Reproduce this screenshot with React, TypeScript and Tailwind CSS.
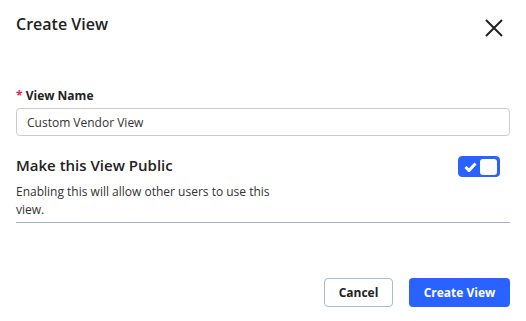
import React, { useState } from "react";

export default function App() {
  const [name, setName] = useState("Custom Vendor View");
  const [isPublic, setIsPublic] = useState(true);

  return (
    <div
      className="w-[526px] h-[321px] bg-white text-[#222] flex flex-col px-4 overflow-hidden"
      style={{ fontFamily: '"Open Sans", "Noto Sans", sans-serif' }}
    >
      {/* header */}
      <div className="flex items-start justify-between pt-[13px]">
        <h1 className="text-[16px] leading-[22px] font-semibold text-[#222]">Create View</h1>
        <button type="button" aria-label="Close" className="mt-[6px] mr-[7px] text-[#222]">
          <svg width="18" height="18" viewBox="0 0 18 18" fill="none">
            <path d="M1 1L17 17M17 1L1 17" stroke="currentColor" strokeWidth="2" />
          </svg>
        </button>
      </div>

      {/* view name */}
      <label className="mt-[51px] text-[12px] leading-[16px] font-bold text-[#222]">
        <span className="text-[#e0245e]">*</span> View Name
      </label>
      <input
        value={name}
        onChange={(e) => setName(e.target.value)}
        className="mt-[4px] h-[28px] w-full rounded-[4px] border border-[#cccccc] px-[10px] text-[12px] text-[#333] outline-none"
      />

      {/* public toggle */}
      <div className="mt-[19px] flex h-[20px] items-start justify-between">
        <div className="text-[15px] leading-[20px] font-semibold text-[#222]">Make this View Public</div>
        <button
          type="button"
          onClick={() => setIsPublic(!isPublic)}
          className={
            isPublic
              ? "mt-[1px] mr-[10px] flex h-[21px] w-[42px] items-center justify-between rounded-[4px] border border-[#2962ff] bg-[#2962ff] pl-[5px] pr-[2px]"
              : "mt-[1px] mr-[10px] flex h-[21px] w-[42px] items-center justify-between rounded-[4px] border border-[#bbbbbb] bg-[#dddddd] pl-[2px] pr-[5px]"
          }
        >
          {isPublic ? (
            <>
              <svg width="13" height="10" viewBox="0 0 13 10" fill="none">
                <path d="M1.5 5L5 8.5L11.5 1.5" stroke="white" strokeWidth="3" />
              </svg>
              <span className="h-[16px] w-[17px] rounded-[3px] bg-white" />
            </>
          ) : (
            <span className="h-[16px] w-[17px] rounded-[3px] bg-white" />
          )}
        </button>
      </div>
      <p className="mt-[8px] w-[270px] text-[12px] leading-[18px] text-[#333]">
        Enabling this will allow other users to use this view.
      </p>
      <div className="mt-[3px] h-px w-full bg-[#9db5cd]" />

      {/* footer */}
      <div className="mt-[55px] flex justify-end gap-[16px]">
        <button
          type="button"
          className="h-[29px] w-[69px] rounded-[4px] border border-[#a8bccc] bg-white text-[12px] font-bold text-[#222]"
        >
          Cancel
        </button>
        <button
          type="button"
          className="h-[29px] w-[101px] rounded-[4px] bg-[#2962ff] text-[12px] font-bold text-white"
        >
          Create View
        </button>
      </div>
    </div>
  );
}
